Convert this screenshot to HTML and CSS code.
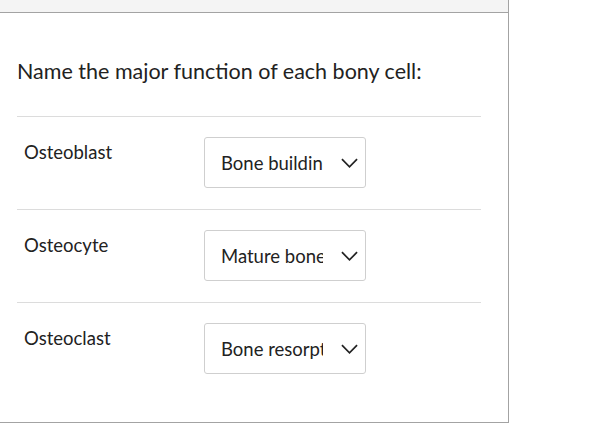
FILE: index.html
```html
<!DOCTYPE html>
<html lang="en">
<head>
   <meta charset="UTF-8">
   <meta name="viewport" content="width=device-width, initial-scale=1.0">
   <title>Bony cells</title>
   <link rel="stylesheet" href="styles.css">
</head>
<body>
   <div id="paneel">
      <div class="balk"></div>
      <div class="vraag">
         <p class="titel">Name the major function of each bony cell:</p>
         <div class="rij">
            <div class="label">Osteoblast</div>
            <div class="keuze"><span>Bone buildin</span><svg viewBox="0 0 18 10" width="17" height="10"><path d="M1 1 L9 9 L17 1" fill="none" stroke="#222" stroke-width="1.8"/></svg></div>
         </div>
         <div class="rij">
            <div class="label">Osteocyte</div>
            <div class="keuze"><span>Mature bone</span><svg viewBox="0 0 18 10" width="17" height="10"><path d="M1 1 L9 9 L17 1" fill="none" stroke="#222" stroke-width="1.8"/></svg></div>
         </div>
         <div class="rij">
            <div class="label">Osteoclast</div>
            <div class="keuze"><span>Bone resorpt</span><svg viewBox="0 0 18 10" width="17" height="10"><path d="M1 1 L9 9 L17 1" fill="none" stroke="#222" stroke-width="1.8"/></svg></div>
         </div>
      </div>
   </div>
</body>
</html>
```

FILE: styles.css
```css
*{
   margin: 0;
   padding: 0;
   box-sizing: border-box;
}

body{
   font-family: Lato, "Liberation Sans", sans-serif;
   color: #222;
   background: #fff;
}

#paneel{
   width: 509px;
   height: 423px;
   border-right: 1px solid #a3a3a3;
   border-bottom: 1px solid #a3a3a3;
}

.balk{
   height: 13px;
   background-color: #f4f4f4;
   border-bottom: 1px solid #a3a3a3;
}

.vraag{
   padding: 0 27px 0 17px;
}

.titel{
   font-size: 21.5px;
   padding: 44px 0 31px;
   line-height: 28px;
}

.rij{
   display: flex;
   border-top: 1px solid #dcdcdc;
   padding: 20px 0 21px 7px;
}

.label{
   width: 180px;
   font-size: 18.5px;
   padding-top: 4px;
}

.keuze{
   width: 162px;
   height: 51px;
   border: 1px solid #cfcfcf;
   border-radius: 3px;
   display: flex;
   align-items: center;
   padding: 0 7px 0 16px;
   font-size: 18.5px;
}

.keuze span{
   width: 102px;
   overflow: hidden;
   white-space: nowrap;
   margin-right: auto;
}
```
